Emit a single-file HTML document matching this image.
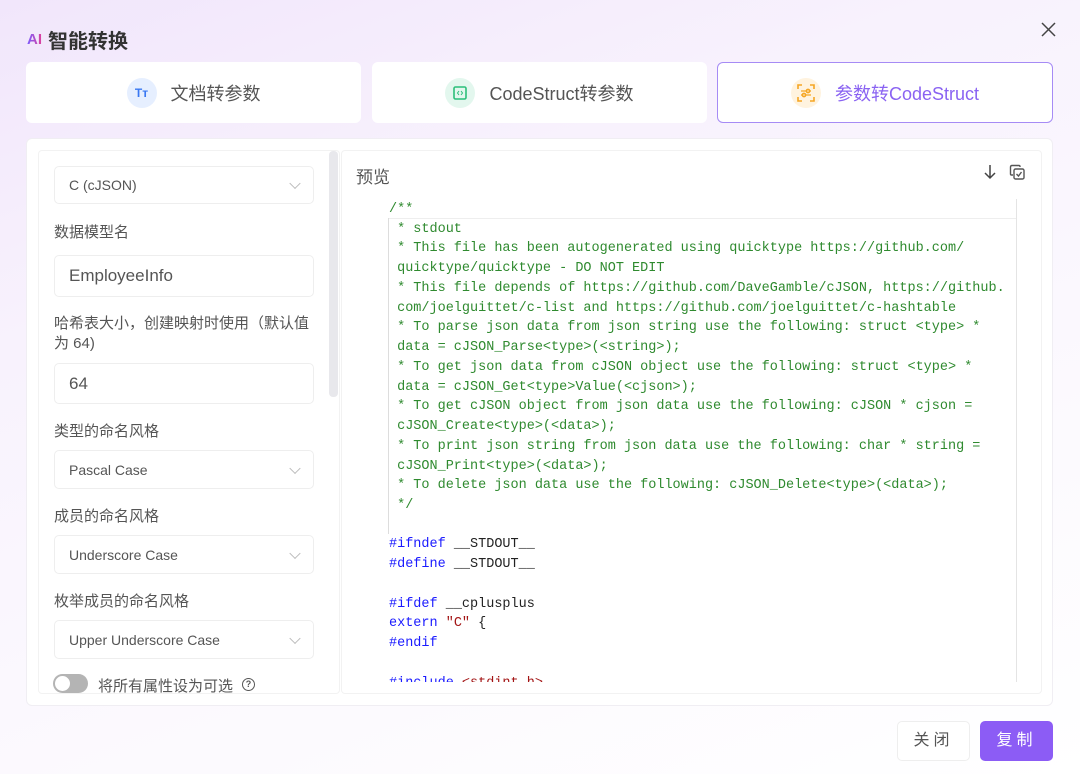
<!DOCTYPE html>
<html><head><meta charset="utf-8"><style>
*{box-sizing:border-box;margin:0;padding:0}
body{width:1080px;height:774px;overflow:hidden;font-family:"Liberation Sans","Noto Sans CJK SC",sans-serif;background:linear-gradient(160deg,#f1e6fb 0%,#f8f2fd 30%,#fbf8fe 60%,#fff 100%);position:relative;color:#333}
.a{position:absolute}
.tab{position:absolute;top:62px;height:61px;background:#fff;border-radius:6px;display:flex;align-items:center;justify-content:center;font-size:18px;color:#555}
.ic{width:30px;height:30px;border-radius:50%;display:flex;align-items:center;justify-content:center;margin-right:14px}
.fld{position:absolute;left:54px;width:260px;border:1px solid #eee;border-radius:5px;background:#fff;font-size:14px;color:#555;padding-left:14px;display:flex;align-items:center}
.chev{position:absolute;right:14px;top:50%;width:8px;height:8px;border-right:1px solid #bbb;border-bottom:1px solid #bbb;transform:translateY(-70%) rotate(45deg)}
.lbl{position:absolute;left:54px;font-size:15px;color:#555}
pre{font-family:"Liberation Mono",monospace;font-size:13.5px;line-height:19.73px;color:#2f8a2f}
.k{color:#1a1aff}.s{color:#a31515}.d{color:#222}
</style></head><body>
<div class="a" style="left:27px;top:25px;font-size:20px;font-weight:bold;color:#333;display:flex;align-items:center"><span style="font-size:15px;background:linear-gradient(90deg,#7a5cff,#e0409a);-webkit-background-clip:text;color:transparent;margin-right:6px;font-weight:900">AI</span>智能转换</div>
<svg class="a" style="left:1041px;top:22px" width="15" height="15" viewBox="0 0 15 15"><path d="M1 1L14 14M14 1L1 14" stroke="#444" stroke-width="1.5"/></svg>

<div class="tab" style="left:26px;width:335px"><div class="ic" style="background:#e6efff;color:#3a78f2;font-size:12px;font-weight:bold">Tт</div>文档转参数</div>
<div class="tab" style="left:372px;width:335px"><div class="ic" style="background:#e3f7ee"><svg width="14" height="14" viewBox="0 0 14 14"><rect x="1" y="1" width="12" height="12" rx="1.5" fill="none" stroke="#2bbf7a" stroke-width="1.6"/><path d="M6 5L4.5 7L6 9M8 5L9.5 7L8 9" fill="none" stroke="#2bbf7a" stroke-width="1"/></svg></div>CodeStruct转参数</div>
<div class="tab" style="left:717px;width:336px;border:1px solid #a68bf5;color:#8a63f2"><div class="ic" style="background:#fff3df"><svg width="18" height="18" viewBox="0 0 18 18" fill="none" stroke="#f5a623" stroke-width="1.6"><path d="M1 5V1H5M13 1H17V5M17 13V17H13M5 17H1V13"/><path d="M4 7H14M4 11H14" stroke-width="1.2"/><circle cx="11" cy="7" r="1.6" fill="#fff3df"/><circle cx="7" cy="11" r="1.6" fill="#fff3df"/></svg></div>参数转CodeStruct</div>

<div class="a" style="left:26px;top:138px;width:1027px;height:568px;background:#fff;border:1px solid #f0eef3;border-radius:6px"></div>
<div class="a" style="left:38px;top:150px;width:302px;height:544px;border:1px solid #f2f2f2;border-radius:4px"></div>
<div class="a" style="left:329px;top:151px;width:9px;height:246px;background:#e8e8ec;border-radius:4px"></div>

<div class="fld" style="top:166px;height:38px">C (cJSON)<span class="chev"></span></div>
<div class="lbl" style="top:221px">数据模型名</div>
<div class="fld" style="top:255px;height:42px;font-size:17px">EmployeeInfo</div>
<div class="lbl" style="top:314px;line-height:20px">哈希表大小，创建映射时使用（默认值<br>为 64)</div>
<div class="fld" style="top:363px;height:41px;font-size:17px">64</div>
<div class="lbl" style="top:420px">类型的命名风格</div>
<div class="fld" style="top:450px;height:39px">Pascal Case<span class="chev"></span></div>
<div class="lbl" style="top:505px">成员的命名风格</div>
<div class="fld" style="top:535px;height:39px">Underscore Case<span class="chev"></span></div>
<div class="lbl" style="top:590px">枚举成员的命名风格</div>
<div class="fld" style="top:620px;height:39px">Upper Underscore Case<span class="chev"></span></div>
<div class="a" style="left:53px;top:674px;width:35px;height:19px;border-radius:10px;background:#b4b4b4"><div style="position:absolute;left:2px;top:2px;width:15px;height:15px;border-radius:50%;background:#fff"></div></div>
<div class="a" style="left:98px;top:675px;font-size:15px;color:#555">将所有属性设为可选</div>
<div class="a" style="left:242px;top:678px;width:13px;height:13px;border:1.5px solid #555;border-radius:50%;font-size:9px;text-align:center;line-height:10px;font-weight:bold;color:#555">?</div>

<div class="a" style="left:341px;top:150px;width:701px;height:544px;border:1px solid #f2f2f2;border-radius:4px"></div>
<div class="a" style="left:356px;top:163px;font-size:17px;color:#555">预览</div>
<svg class="a" style="left:983px;top:164px" width="14" height="16" viewBox="0 0 14 16"><path d="M7 1V14M2 9L7 14L12 9" fill="none" stroke="#444" stroke-width="1.5"/></svg>
<svg class="a" style="left:1009px;top:164px" width="17" height="17" viewBox="0 0 17 17" fill="none" stroke="#555" stroke-width="1.4"><path d="M11 3V2.5Q11 1.5 10 1.5H3Q1.5 1.5 1.5 3V10Q1.5 11 2.5 11H4"/><rect x="5" y="5" width="10" height="10" rx="1.5"/><path d="M7.5 10L9.5 12L12.5 8"/></svg>

<div class="a" style="left:388px;top:199px;width:638px;height:483px;overflow:hidden">
<div class="a" style="left:0;top:19px;width:628px;height:1px;background:#eee"></div>
<div class="a" style="left:0;top:19px;width:1px;height:316px;background:#ddd"></div>
<div class="a" style="left:628px;top:0;width:1px;height:483px;background:#e4e4e4"></div>
<pre class="a" style="left:1px;top:1px">/**
 * stdout
 * This file has been autogenerated using quicktype https://github.com/
 quicktype/quicktype - DO NOT EDIT
 * This file depends of https://github.com/DaveGamble/cJSON, https://github.
 com/joelguittet/c-list and https://github.com/joelguittet/c-hashtable
 * To parse json data from json string use the following: struct &lt;type&gt; *
 data = cJSON_Parse&lt;type&gt;(&lt;string&gt;);
 * To get json data from cJSON object use the following: struct &lt;type&gt; *
 data = cJSON_Get&lt;type&gt;Value(&lt;cjson&gt;);
 * To get cJSON object from json data use the following: cJSON * cjson =
 cJSON_Create&lt;type&gt;(&lt;data&gt;);
 * To print json string from json data use the following: char * string =
 cJSON_Print&lt;type&gt;(&lt;data&gt;);
 * To delete json data use the following: cJSON_Delete&lt;type&gt;(&lt;data&gt;);
 */

<span class="k">#ifndef</span> <span class="d">__STDOUT__</span>
<span class="k">#define</span> <span class="d">__STDOUT__</span>

<span class="k">#ifdef</span> <span class="d">__cplusplus</span>
<span class="k">extern</span> <span class="s">"C"</span> <span class="d">{</span>
<span class="k">#endif</span>

<span class="k">#include</span> <span class="s">&lt;stdint.h&gt;</span></pre>
</div>

<div class="a" style="left:897px;top:721px;width:73px;height:40px;border:1px solid #eee;border-radius:5px;background:#fff;font-size:16px;color:#555;text-align:center;line-height:38px;letter-spacing:4px">关闭</div>
<div class="a" style="left:980px;top:721px;width:73px;height:40px;border-radius:5px;background:#8c5cf5;font-size:16px;color:#fff;text-align:center;line-height:40px;letter-spacing:4px">复制</div>
</body></html>
